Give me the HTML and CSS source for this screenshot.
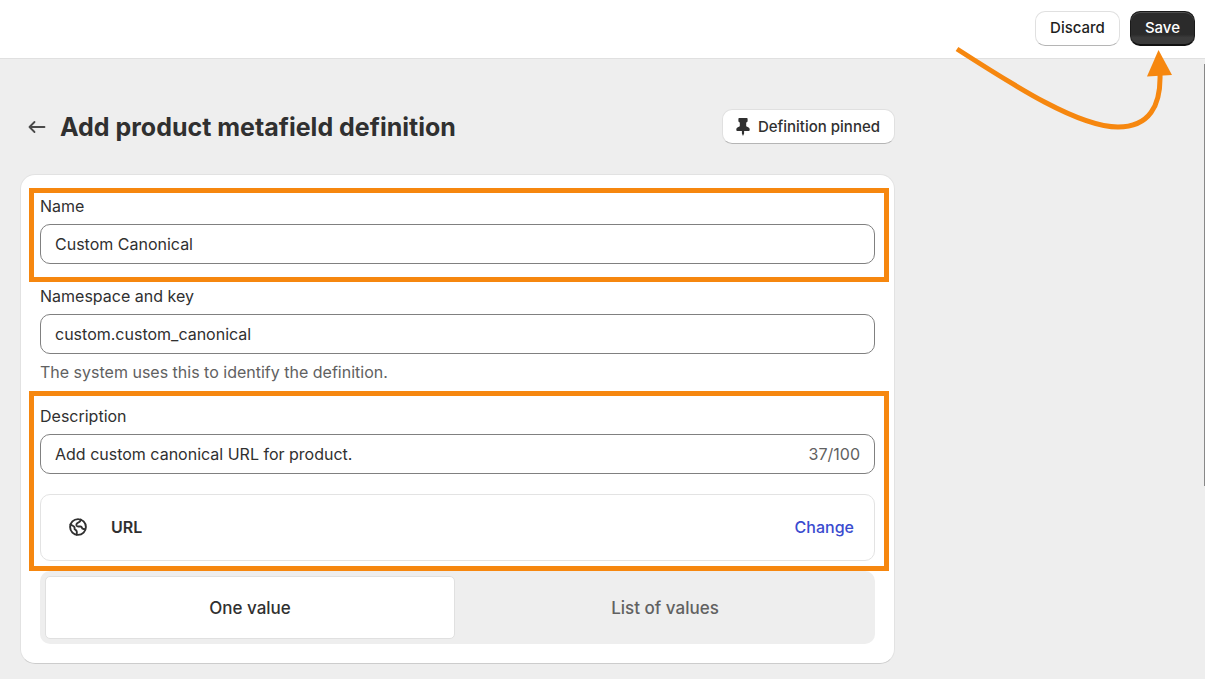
FILE: index.html
```html
<!DOCTYPE html>
<html lang="en">
<head>
<meta charset="utf-8">
<meta name="viewport" content="width=device-width, initial-scale=1">
<title>Add product metafield definition</title>
<link rel="stylesheet" href="styles.css">
</head>
<body>
<header class="topbar">
  <button type="button" class="button">Discard</button>
  <button type="button" class="button button-primary">Save</button>
  <svg class="pointer" viewBox="0 0 224 90" aria-hidden="true">
    <path d="M3 5C62 43 125 83 164 83C195 83 207 62 206 30" fill="none" stroke="#f6870f" stroke-width="5"/>
    <path d="M204.500 6L218 31L193 32.500Z" fill="#f6870f"/>
  </svg>
</header>
<main class="page">
  <div class="page-header">
    <a href="#" class="back" aria-label="Back">
      <svg viewBox="0 0 18 14" width="18" height="14" fill="none" stroke="#4a4a4a" stroke-width="1.800" stroke-linecap="round" stroke-linejoin="round"><path d="M16.500 7H1.500M6.500 2L1.500 7L6.500 12"/></svg>
    </a>
    <h1 class="title">Add product metafield definition</h1>
    <button type="button" class="button button-pin">
      <svg viewBox="0 0 14 18" width="14" height="18" fill="#303030" aria-hidden="true"><path d="M3.200 0H10.800Q11.600 0 11.600 .8V3Q11.600 3.800 10.800 4.200L10.200 4.600V8.300L12.600 9.600Q13.700 10.300 13.700 11.400V12Q13.700 13 12.700 13H8.100V15.500L7 18L5.900 15.500V13H1.300Q.3 13 .3 12V11.400Q.3 10.300 1.400 9.600L3.800 8.300V4.600L3.200 4.200Q2.400 3.800 2.400 3V.8Q2.400 0 3.200 0Z"/></svg>
      Definition pinned
    </button>
  </div>
  <form class="card">
    <div class="field highlight highlight-name">
      <label for="name">Name</label>
      <input class="input" id="name" type="text" value="Custom Canonical">
    </div>
    <div class="field">
      <label for="key">Namespace and key</label>
      <input class="input" id="key" type="text" value="custom.custom_canonical" aria-describedby="key-help">
      <p class="help" id="key-help">The system uses this to identify the definition.</p>
    </div>
    <div class="details highlight highlight-details">
      <div class="field">
        <label for="description">Description</label>
        <div class="input input-group">
          <input class="bare-input" id="description" type="text" value="Add custom canonical URL for product.">
          <span class="counter">37/100</span>
        </div>
      </div>
      <div class="type">
        <svg viewBox="0 0 20 20" width="20" height="20" fill="none" stroke="#303030" stroke-width="1.900" stroke-linejoin="round" stroke-linecap="round" aria-hidden="true"><circle cx="10" cy="10" r="7.900"/><path d="M2.600 7.500L5.600 9.300Q6.600 10 6.600 11V12L8.500 13.800Q9.200 14.700 8.600 17.700M12.800 2.600L12 4.500L9.200 6.300Q8 7.300 8.500 8.600Q9 9.500 10.500 9.500H12.500Q13.600 9.500 13.800 10.500Q14 11.800 15.500 12L17 12.300"/></svg>
        <span class="type-name">URL</span>
        <button type="button" class="change">Change</button>
      </div>
    </div>
    <div class="segments">
      <button type="button" class="segment segment-active" aria-pressed="true">One value</button>
      <button type="button" class="segment" aria-pressed="false">List of values</button>
    </div>
  </form>
</main>
<div class="scroll-thumb"></div>
</body>
</html>
```
FILE: styles.css
```css
* { box-sizing: border-box; }
body {
  margin: 0;
  min-height: 100vh;
  background: #eeeeee;
  color: #303030;
  font: 16px/24px Inter, "Liberation Sans", sans-serif;
}
button, input { font: inherit; color: inherit; }
button { cursor: pointer; }
.topbar {
  position: relative;
  display: flex;
  justify-content: flex-end;
  gap: 10px;
  padding: 11px 10px 12px;
  background: #ffffff;
  border-bottom: 1px solid #e0e0e0;
}
.button {
  display: flex;
  align-items: center;
  justify-content: center;
  gap: 8px;
  height: 35px;
  padding: 0 14px;
  border: 1px solid #e0e0e0;
  border-bottom-color: #b5b5b5;
  border-radius: 10px;
  background: #ffffff;
  font-size: 15px;
  font-weight: 500;
  white-space: nowrap;
}
.topbar .button { padding-bottom: 1px; color: #1f1f1f; }
.topbar .button-primary {
  border: 1px solid #1a1a1a;
  border-bottom: 2px solid #111111;
  background: linear-gradient(#2b2b2b 70%, #3b3b3b 80%);
  box-shadow: inset 0 1px 0 #505050;
  padding-bottom: 0;
  color: #ffffff;
}
.pointer {
  position: absolute;
  top: 44px;
  right: 27px;
  width: 224px;
  height: 90px;
  pointer-events: none;
}
.page { padding: 50px 310px 15px 20px; }
.page-header {
  display: flex;
  align-items: center;
  padding-left: 8px;
  margin-bottom: 30px;
}
.back { display: flex; margin-right: 14px; }
.title {
  flex: 1;
  margin: 0;
  font-size: 25px;
  font-weight: 650;
  line-height: 32px;
}
.button-pin { padding: 0 14px 0 13px; }
.card {
  display: flex;
  flex-direction: column;
  gap: 20px;
  padding: 19px;
  border: 1px solid #e2e2e2;
  border-bottom-color: #cccccc;
  border-radius: 15px;
  background: #ffffff;
}
.field { display: flex; flex-direction: column; gap: 6px; }
.input {
  width: 100%;
  height: 40px;
  padding: 0 14px;
  border: 1px solid #808080;
  border-radius: 10px;
  background: #ffffff;
}
.input-group { display: flex; align-items: center; gap: 8px; }
.bare-input { flex: 1; min-width: 0; padding: 0; border: 0; outline: 0; }
.counter, .help { color: #616161; }
.help { margin: 0; }
.details { display: flex; flex-direction: column; gap: 20px; }
.highlight { position: relative; }
.highlight::after {
  content: "";
  position: absolute;
  border: 5px solid #f6870f;
  pointer-events: none;
}
.highlight-name::after { inset: -6px -14px -18px -11px; }
.highlight-details::after { inset: -13px -14px -10px -11px; }
.type {
  display: flex;
  align-items: center;
  height: 67px;
  padding: 0 20px 2px 27px;
  border: 1px solid #e3e3e3;
  border-radius: 10px;
}
.type-name { flex: 1; margin-left: 23px; font-weight: 600; }
.change { padding: 0; border: 0; background: none; color: #3a4bcf; font-weight: 500; }
.segments {
  display: grid;
  grid-template-columns: 1fr 1fr;
  gap: 5px;
  margin-top: -10px;
  padding: 5px;
  border-radius: 10px;
  background: #eeeeee;
}
.segment {
  height: 63px;
  border: 1px solid transparent;
  border-radius: 5px;
  background: none;
  color: #616161;
  font-size: 17px;
  font-weight: 500;
}
.segment-active { border-color: #e0e0e0; background: #ffffff; color: #303030; }
.scroll-thumb {
  position: absolute;
  top: 64px;
  right: 0;
  width: 1px;
  height: 422px;
  background: #888888;
}
```
